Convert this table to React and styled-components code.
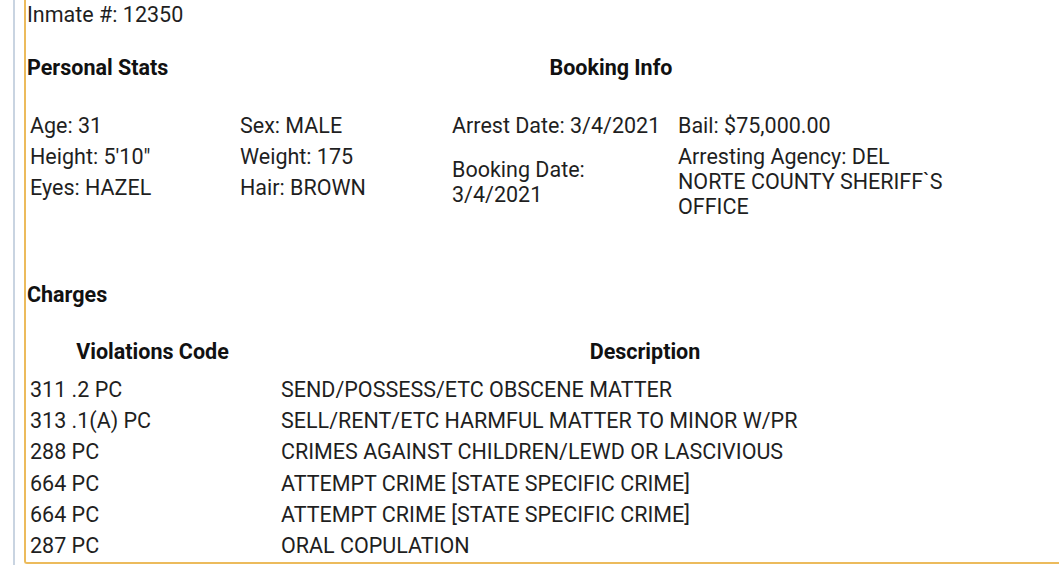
import React from 'react';
import styled, { createGlobalStyle } from 'styled-components';

const GlobalStyle = createGlobalStyle`
  html, body {
    margin: 0;
    padding: 0;
    background: #ffffff;
  }
  body {
    font-family: Roboto, "Noto Sans", Arial, sans-serif;
    color: #1f1f1f;
    overflow: hidden;
  }
`;

const Page = styled.div`
  display: flex;
  height: 565px;
  width: 1059px;
  padding-left: 13px;
  box-sizing: border-box;
  overflow: hidden;
`;

const Rail = styled.div`
  width: 2px;
  flex: none;
  background: #c9d4e1;
`;

const Panel = styled.div`
  flex: none;
  width: 1060px;
  margin-left: 9px;
  height: 564px;
  box-sizing: border-box;
  border-left: 2px solid #ecbb5c;
  border-bottom: 2px solid #ecbb5c;
  border-bottom-left-radius: 3px;
  padding: 2px 0 0 1px;
  font-size: 21.5px;
  line-height: 25px;
`;

const Line = styled.div`
  white-space: nowrap;
`;

const Heading = styled.div`
  font-weight: 700;
  color: #111;
  margin-top: ${(p) => p.$top || 0}px;
  width: ${(p) => (p.$width ? `${p.$width}px` : 'auto')};
  text-align: ${(p) => p.$align || 'left'};
  white-space: nowrap;
`;

const TopRow = styled.div`
  display: flex;
  margin-top: 28px;
`;

const Section = styled.div`
  width: ${(p) => (p.$width ? `${p.$width}px` : 'auto')};
  flex: none;
`;

const StatsGrid = styled.div`
  display: grid;
  grid-template-columns: ${(p) => p.$cols};
  margin-top: 30px;
`;

const Cell = styled.div`
  padding: 3px;
  display: flex;
  align-items: center;
`;

const CodeTable = styled.div`
  display: grid;
  grid-template-columns: 251px 734px;
  margin-top: 29px;
`;

const HeadCell = styled.div`
  font-weight: 700;
  color: #111;
  text-align: center;
  padding: 3px 3px 10px;
`;

const DataCell = styled.div`
  padding: 3.1px 3px;
  white-space: nowrap;
`;

const personal = [
  ['Age: 31', 'Sex: MALE'],
  ["Height: 5'10\"", 'Weight: 175'],
  ['Eyes: HAZEL', 'Hair: BROWN'],
];

const charges = [
  ['311 .2 PC', 'SEND/POSSESS/ETC OBSCENE MATTER'],
  ['313 .1(A) PC', 'SELL/RENT/ETC HARMFUL MATTER TO MINOR W/PR'],
  ['288 PC', 'CRIMES AGAINST CHILDREN/LEWD OR LASCIVIOUS'],
  ['664 PC', 'ATTEMPT CRIME [STATE SPECIFIC CRIME]'],
  ['664 PC', 'ATTEMPT CRIME [STATE SPECIFIC CRIME]'],
  ['287 PC', 'ORAL COPULATION'],
];

const App = () => (
  <>
    <GlobalStyle />
    <Page>
      <Rail />
      <Panel>
        <Line>Inmate #: 12350</Line>

        <TopRow>
          <Section $width={422}>
            <Heading>Personal Stats</Heading>
            <StatsGrid $cols="210px 212px">
              {personal.flat().map((text, i) => (
                <Cell key={i}>
                  <span>{text}</span>
                </Cell>
              ))}
            </StatsGrid>
          </Section>
          <Section>
            <Heading $width={324} $align="center">
              Booking Info
            </Heading>
            <StatsGrid $cols="226px 276px">
              <Cell>
                <span>Arrest Date: 3/4/2021</span>
              </Cell>
              <Cell>
                <span>Bail: $75,000.00</span>
              </Cell>
              <Cell>
                <span>
                  Booking Date:
                  <br />
                  3/4/2021
                </span>
              </Cell>
              <Cell>
                <span>Arresting Agency: DEL NORTE COUNTY SHERIFF`S OFFICE</span>
              </Cell>
            </StatsGrid>
          </Section>
        </TopRow>

        <Heading $top={60}>Charges</Heading>

        <CodeTable>
          <HeadCell>Violations Code</HeadCell>
          <HeadCell>Description</HeadCell>
          {charges.map(([code, desc], i) => (
            <React.Fragment key={i}>
              <DataCell>{code}</DataCell>
              <DataCell>{desc}</DataCell>
            </React.Fragment>
          ))}
        </CodeTable>
      </Panel>
    </Page>
  </>
);

export default App;
